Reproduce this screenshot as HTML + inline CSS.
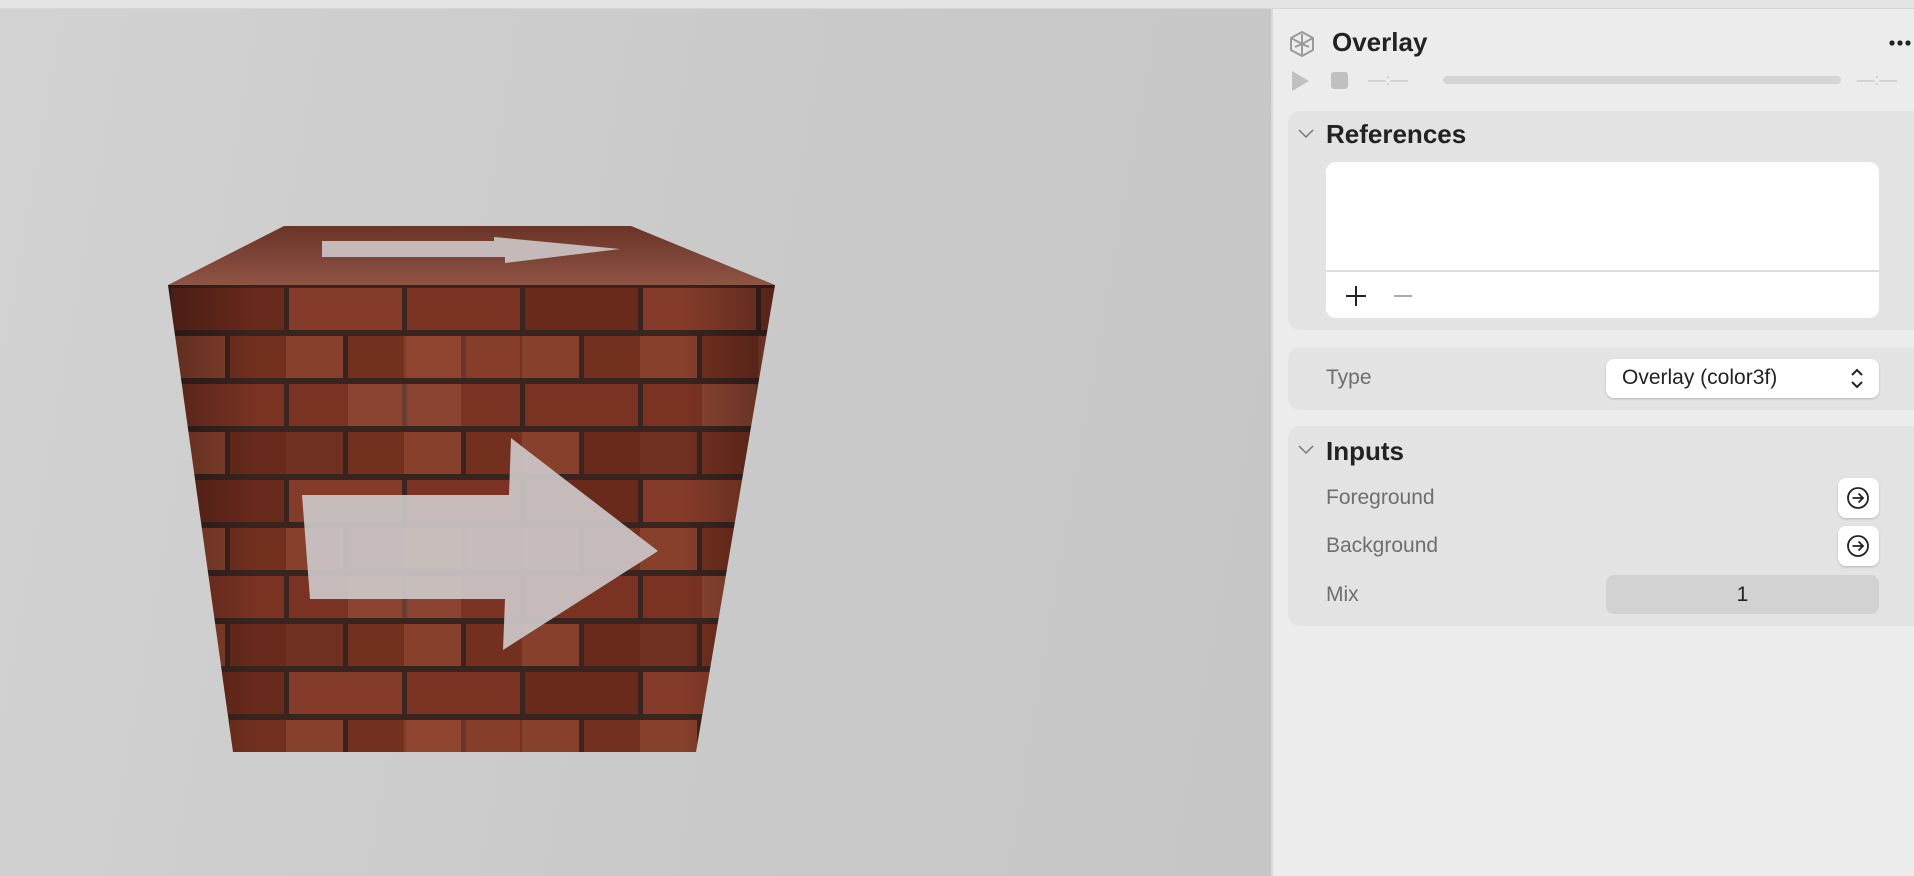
<!DOCTYPE html>
<html><head><meta charset="utf-8"><style>
*{margin:0;padding:0;box-sizing:border-box}
body{width:1914px;height:876px;overflow:hidden;font-family:"Liberation Sans",sans-serif;background:#ececec;position:relative}
#vp{position:absolute;left:0;top:9px;width:1271px;height:867px;background:linear-gradient(100deg,#d2d2d2 0%,#c9c9c9 60%,#c6c6c6 100%)}
#topbar{position:absolute;left:0;top:0;width:1914px;height:9px;background:#e4e4e4;border-bottom:1px solid #d6d6d6}
#panel{position:absolute;left:1271px;top:9px;width:643px;height:867px;background:#ececec;border-left:2px solid #d9d9d9}
.abs{position:absolute}
.sec{position:absolute;left:1288px;width:640px;background:#e3e3e3;border-radius:12px}
.lbl{position:absolute;left:1326px;font-size:21px;color:#6e6e6e}
.hd{position:absolute;left:1326px;font-size:26px;font-weight:bold;color:#222}
.btn{position:absolute;left:1838px;width:41px;height:40px;background:#fff;border-radius:8px;box-shadow:0 1px 2px rgba(0,0,0,.2)}
</style></head><body>
<div id="topbar"></div>
<div id="vp"></div>
<svg width="1271" height="876" style="position:absolute;left:0;top:0">
<defs>
<pattern id="br" width="118" height="96" patternUnits="userSpaceOnUse" x="168" y="285">
<rect width="118" height="96" fill="#3a2420"/>
<rect x="3" y="3" width="113" height="42" fill="#7a3323"/>
<rect x="-56" y="51" width="113" height="42" fill="#86402c"/>
<rect x="62" y="51" width="113" height="42" fill="#73301f"/>
</pattern>
<pattern id="br2" width="354" height="192" patternUnits="userSpaceOnUse" x="168" y="285">
<rect x="3" y="3" width="113" height="42" fill="#5e2418" opacity=".6"/>
<rect x="180" y="99" width="113" height="42" fill="#9c5640" opacity=".5"/>
<rect x="62" y="147" width="113" height="42" fill="#62261a" opacity=".6"/>
<rect x="239" y="51" width="113" height="42" fill="#9a4a34" opacity=".5"/>
<rect x="121" y="3" width="113" height="42" fill="#8e4430" opacity=".5"/>
</pattern>
<linearGradient id="sh" x1="0" y1="0" x2="1" y2="0">
<stop offset="0" stop-color="#000" stop-opacity=".3"/><stop offset=".15" stop-color="#000" stop-opacity="0"/>
<stop offset=".85" stop-color="#000" stop-opacity="0"/><stop offset="1" stop-color="#000" stop-opacity=".3"/></linearGradient>
<linearGradient id="tp" x1="0" y1="0" x2="0" y2="1"><stop offset="0" stop-color="#6a3428"/><stop offset="1" stop-color="#8e5444"/></linearGradient>
</defs>
<polygon points="168,285 284,226 631,226 775,285" fill="url(#tp)"/>
<polygon points="322,241 494,241 494,237 620,249 505,263 505,257 322,257" fill="#cdc8c8" opacity=".9"/>
<polygon points="168,285 775,285 696,752 233,752" fill="url(#br)"/>
<polygon points="168,285 775,285 696,752 233,752" fill="url(#br2)"/>
<polygon points="168,285 775,285 696,752 233,752" fill="url(#sh)"/>
<polygon points="302,495 509,495 511,438 658,551 503,650 505,599 310,599" fill="#cbc6c6" opacity=".93"/>
</svg>
<div id="panel"></div>
<svg class="abs" style="left:1289px;top:30px" width="26" height="28" viewBox="0 0 26 28" fill="none" stroke="#9a9a9a" stroke-width="2"><path d="M13 2 L24 8 L24 20 L13 26 L2 20 L2 8 Z M2 8 L13 14 L24 8 M13 14 L13 26 M13 4 L13 14 M6 17 L13 14 L20 17"/></svg>
<div class="abs" style="left:1332px;top:27px;font-size:26px;font-weight:bold;color:#222">Overlay</div>
<svg class="abs" style="left:1886px;top:38px" width="28" height="10"><circle cx="6" cy="5" r="2.6" fill="#222"/><circle cx="14" cy="5" r="2.6" fill="#222"/><circle cx="22" cy="5" r="2.6" fill="#222"/></svg>
<svg class="abs" style="left:1292px;top:71px" width="18" height="20"><polygon points="0,0 17,10 0,20" fill="#c0c0c0"/></svg>
<div class="abs" style="left:1331px;top:72px;width:17px;height:17px;border-radius:3px;background:#c0c0c0"></div>
<div class="abs" style="left:1368px;top:72px;font-size:16px;color:#c0c0c0">––:––</div>
<div class="abs" style="left:1443px;top:76px;width:398px;height:8px;border-radius:4px;background:#d5d5d5"></div>
<div class="abs" style="left:1857px;top:72px;font-size:16px;color:#c0c0c0">––:––</div>

<div class="sec" style="top:111px;height:219px"></div>
<svg class="abs" style="left:1298px;top:129px" width="16" height="10"><path d="M1 1 L8 8 L15 1" fill="none" stroke="#777" stroke-width="1.5"/></svg>
<div class="hd" style="top:119px">References</div>
<div class="abs" style="left:1326px;top:162px;width:553px;height:156px;background:#fff;border-radius:10px"></div>
<div class="abs" style="left:1326px;top:270px;width:553px;height:2px;background:#dedede"></div>
<div class="abs" style="left:1346px;top:295px;width:20px;height:2px;background:#222"></div>
<div class="abs" style="left:1355px;top:286px;width:2px;height:20px;background:#222"></div>
<div class="abs" style="left:1394px;top:295px;width:18px;height:2px;background:#aaa"></div>

<div class="sec" style="top:347px;height:63px"></div>
<div class="lbl" style="top:366px">Type</div>
<div class="abs" style="left:1606px;top:359px;width:273px;height:39px;background:#fff;border-radius:8px;box-shadow:0 1px 2px rgba(0,0,0,.2)"></div>
<div class="abs" style="left:1622px;top:366px;font-size:21px;color:#222">Overlay (color3f)</div>
<svg class="abs" style="left:1850px;top:367px" width="14" height="23"><path d="M2 8 L7 3 L12 8 M2 15 L7 20 L12 15" fill="none" stroke="#222" stroke-width="2"/></svg>

<div class="sec" style="top:426px;height:200px"></div>
<svg class="abs" style="left:1298px;top:445px" width="16" height="10"><path d="M1 1 L8 8 L15 1" fill="none" stroke="#777" stroke-width="1.5"/></svg>
<div class="hd" style="top:436px">Inputs</div>
<div class="lbl" style="top:486px">Foreground</div>
<div class="btn" style="top:478px"></div>
<svg class="abs" style="left:1846px;top:486px" width="24" height="24"><circle cx="12" cy="12" r="10" fill="none" stroke="#222" stroke-width="1.8"/><path d="M6.5 12 H17 M12.5 7.5 L17 12 L12.5 16.5" fill="none" stroke="#222" stroke-width="1.8"/></svg>
<div class="lbl" style="top:534px">Background</div>
<div class="btn" style="top:526px"></div>
<svg class="abs" style="left:1846px;top:534px" width="24" height="24"><circle cx="12" cy="12" r="10" fill="none" stroke="#222" stroke-width="1.8"/><path d="M6.5 12 H17 M12.5 7.5 L17 12 L12.5 16.5" fill="none" stroke="#222" stroke-width="1.8"/></svg>
<div class="lbl" style="top:583px">Mix</div>
<div class="abs" style="left:1606px;top:575px;width:273px;height:39px;background:#d2d2d2;border-radius:8px;text-align:center;font-size:21px;line-height:39px;color:#222">1</div>
</body></html>
